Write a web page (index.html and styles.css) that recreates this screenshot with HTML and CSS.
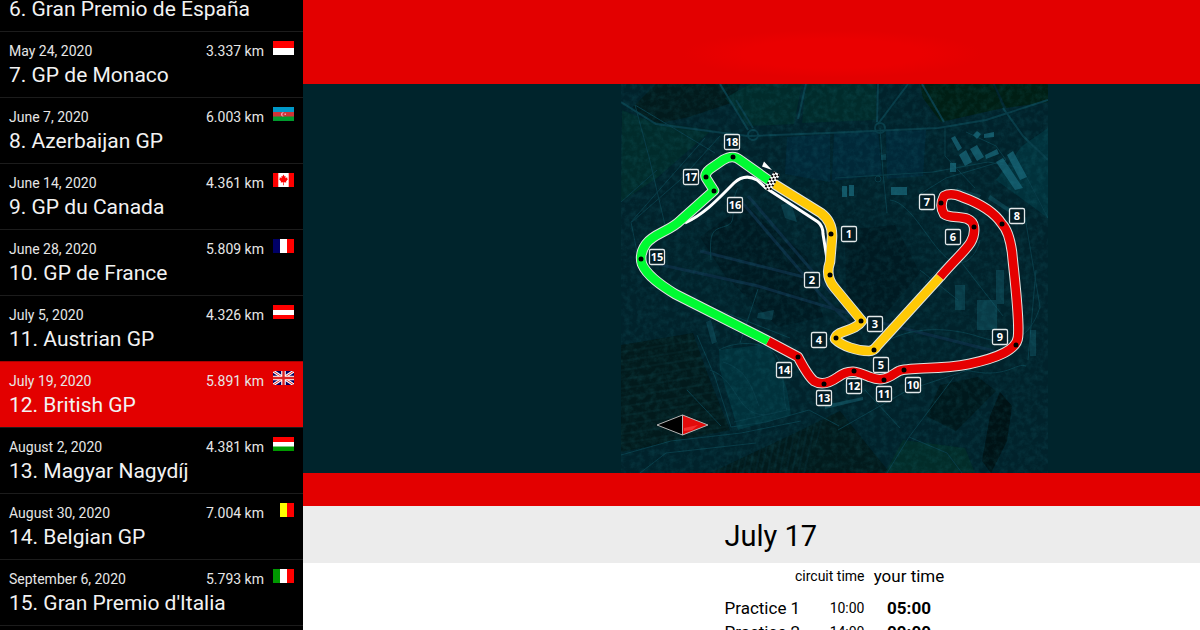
FILE: index.html
```html
<!DOCTYPE html>
<html lang="en">
<head>
<meta charset="utf-8">
<title>Race calendar 2020</title>
<link rel="stylesheet" href="styles.css">
</head>
<body>
<div class="app">
  <nav class="sidebar" aria-label="Races">
    <ul class="races">
      <li><a class="race" href="#r6"><span class="meta"><span class="date">May 10, 2020</span><span class="km">4.655 km</span><svg class="flag" viewBox="0 0 21 14"><path fill="#f00" d="M0 0h21v14H0z"/><path fill="#fc0" d="M0 4h21v6H0z"/></svg></span><span class="name">6. Gran Premio de España</span></a></li>
      <li><a class="race" href="#r7"><span class="meta"><span class="date">May 24, 2020</span><span class="km">3.337 km</span><svg class="flag" viewBox="0 0 21 14"><path fill="#fff" d="M0 0h21v14H0z"/><path fill="#f00" d="M0 0h21v7H0z"/></svg></span><span class="name">7. GP de Monaco</span></a></li>
      <li><a class="race" href="#r8"><span class="meta"><span class="date">June 7, 2020</span><span class="km">6.003 km</span><svg class="flag" viewBox="0 0 21 14"><path fill="#0098c8" d="M0 0h21v5H0z"/><path fill="#d03338" d="M0 5h21v5H0z"/><path fill="#009b2e" d="M0 9.500h21V14H0z"/><path d="M11 5.700a2 2 0 1 0 0 3.400a1.500 1.500 0 1 1 0-3.400zM11.500 6.500h1.500v1.600h-1.500z" fill="#fbd" opacity=".8"/></svg></span><span class="name">8. Azerbaijan GP</span></a></li>
      <li><a class="race" href="#r9"><span class="meta"><span class="date">June 14, 2020</span><span class="km">4.361 km</span><svg class="flag" viewBox="0 0 21 14"><path fill="#fff" d="M0 0h21v14H0z"/><path fill="#f00" d="M0 0h5.300v14H0zM15.700 0H21v14h-5.300zM10.500 1.500l1.100 2 1-.4-.2 2.100 1.900-.9-.2 1.200.9.400-2 2.600.3 1.100-2.500-.4.100 3h-.8l.1-3-2.500.4.300-1.100-2-2.600.9-.4-.2-1.200 1.900.9-.2-2.100 1 .4z"/></svg></span><span class="name">9. GP du Canada</span></a></li>
      <li><a class="race" href="#r10"><span class="meta"><span class="date">June 28, 2020</span><span class="km">5.809 km</span><svg class="flag" viewBox="0 0 21 14"><path fill="#006" d="M0 0h7v14H0z"/><path fill="#fff" d="M7 0h7v14H7z"/><path fill="#f00" d="M14 0h7v14h-7z"/></svg></span><span class="name">10. GP de France</span></a></li>
      <li><a class="race" href="#r11"><span class="meta"><span class="date">July 5, 2020</span><span class="km">4.326 km</span><svg class="flag" viewBox="0 0 21 14"><path fill="#f00" d="M0 0h21v14H0z"/><path fill="#fff" d="M0 5h21v5H0z"/></svg></span><span class="name">11. Austrian GP</span></a></li>
      <li><a class="race current" href="#r12" aria-current="page"><span class="meta"><span class="date">July 19, 2020</span><span class="km">5.891 km</span><svg class="flag" viewBox="0 0 21 14"><path fill="#006" d="M0 0h21v14H0z"/><path d="M0 0l21 14M21 0L0 14" stroke="#fff" stroke-width="3"/><path d="M0 0l21 14M21 0L0 14" stroke="#d22" stroke-width="1"/><path d="M10.500 0v14M0 7h21" stroke="#fff" stroke-width="4.600"/><path d="M10.500 0v14M0 7h21" stroke="#d22" stroke-width="2.400"/></svg></span><span class="name">12. British GP</span></a></li>
      <li><a class="race" href="#r13"><span class="meta"><span class="date">August 2, 2020</span><span class="km">4.381 km</span><svg class="flag" viewBox="0 0 21 14"><path fill="#f00" d="M0 0h21v5H0z"/><path fill="#fff" d="M0 5h21v5H0z"/><path fill="#090" d="M0 9.500h21V14H0z"/></svg></span><span class="name">13. Magyar Nagydíj</span></a></li>
      <li><a class="race" href="#r14"><span class="meta"><span class="date">August 30, 2020</span><span class="km">7.004 km</span><svg class="flag" viewBox="0 0 21 14"><path d="M0 0h7v14H0z"/><path fill="#ff0" d="M7 0h7v14H7z"/><path fill="#f00" d="M14 0h7v14h-7z"/></svg></span><span class="name">14. Belgian GP</span></a></li>
      <li><a class="race" href="#r15"><span class="meta"><span class="date">September 6, 2020</span><span class="km">5.793 km</span><svg class="flag" viewBox="0 0 21 14"><path fill="#090" d="M0 0h7v14H0z"/><path fill="#fff" d="M7 0h7v14H7z"/><path fill="#f00" d="M14 0h7v14h-7z"/></svg></span><span class="name">15. Gran Premio d'Italia</span></a></li>
      <li><a class="race" href="#r16"><span class="meta"><span class="date">September 20, 2020</span><span class="km">5.063 km</span></span><span class="name">16. Singapore GP</span></a></li>
    </ul>
  </nav>

  <main class="content">
    <header class="banner"></header>
    <section class="circuit">
      <svg class="map" viewBox="621 84 427 389" role="img" aria-label="Circuit map">
        <defs>
          <filter id="grain" x="0" y="0" width="100%" height="100%">
            <feTurbulence type="fractalNoise" baseFrequency=".16" numOctaves="4" seed="8"/>
            <feColorMatrix values="0 0 0 0 .02  0 0 0 0 .32  0 0 0 0 .38  1.600 0 0 0 -.6"/>
          </filter>
          <pattern id="furrow" width="9" height="9" patternUnits="userSpaceOnUse" patternTransform="rotate(-9)"><path d="M0 4h9" stroke="#06282c" stroke-width="1"/></pattern>
          <pattern id="rows" width="6" height="6" patternUnits="userSpaceOnUse" patternTransform="rotate(12)"><path d="M3 0v6" stroke="#03282f" stroke-width="1"/></pattern>
        </defs>
        <path fill="#01222b" d="M621 84h427v389H621z"/>
        <!-- fields -->
        <path fill="#021a1c" d="M656 84h84l-6 18-45 15-38 8-18-18zM710 473l85-40 45-22 50 62zM621 345l72-12 15 42 22 55-109 22z"/>
        <path fill="#012b2b" d="M750 84h52l-8 40-45 2-24-28zM806 84h70l1 36-75 3zM622 110l30 12 60 8-55 48-36 24z"/>
        <path fill="#001e14" d="M920 84h73l10 24-62 14-18-24zM995 84h53v18l-42 6z"/>
        <path fill="#012838" d="M787 137l43-3v48l-45-8zM834 132l44-2 4 45-50 6zM886 131l40-1-3 46-36 3z"/>
        <path fill="#01313b" d="M1022 146l26-18v90l-52-38zM719 350l50-6 18 45 4 26-53 15-18-60z"/>
        <path fill="#001a22" d="M745 205l62 52 16 60-45 10-52-50-26-40zM845 230l50-5 25 48-44 52-30-30z"/>
        <path fill="#022c29" d="M903 440l62 8 10 25h-90z"/>
        <path fill="#001215" d="M1000 392l12 14-5 35-16 32-9-12 8-45z"/>
        <path fill="#00181c" d="M940 385l38-8 18 14-40 40-30-15z"/>
        <path fill="url(#furrow)" d="M621 345l72-12 15 42 22 55-109 22z"/>
        <path fill="url(#rows)" d="M735 440l90-20-20 53H715z"/>
        <!-- roads and runways -->
        <g fill="none" stroke="#083b47" stroke-width="1">
          <path d="M621 102l35 22 60 8 32 4M748 136l80-3 110-5 48-8 62-20M748 130l-28-46M753 128l-17-28M806 84l-8 35M877 122l1-38M878 124l30-40M922 84l22 38M1003 108l20 28 25 24" stroke-width="2"/>
          <circle cx="753" cy="135" r="5" stroke-width="2"/><circle cx="880" cy="128" r="5" stroke-width="2"/><circle cx="878" cy="179" r="3"/>
          <path d="M635 105l14 52 16 68M635 105l80 48M720 136l-40 44-48 42M705 138l-74 84 8 40M657 170l-36 32"/>
          <path d="M740 200l80 94 30 30M748 196l84 98M700 251l120 30M648 262l110 24 120 36 120 30" stroke="#0a2b3f" stroke-width="3"/>
          <path d="M711 260c-2-30 2-30 15-34s2-20 12-38M675 293l115 45M740 343l18-54"/>
          <path d="M835 178l98-6 55-10 34 6 26 50M945 128v28l30 32M966 132l30 14 10 14-60 18-26 16M880 128l3 45 4 40M890 200c22 2 42 50 60 60s28-10 30-20"/>
          <path d="M697 335l18 42 16 50 35-5 43-12 30 16M687 390l34 36M719 350c14-8 40-10 54 2s8 44 14 58l-53 12M710 370c30 10 26 50 60 44M723 362c26 8 30 30 36 44"/>
          <path d="M621 455l50-14 70-8 60-12M640 473l26-20 90-10M900 428l-35-38M909 437l45-60M909 437l-22 36M909 437l38 16 15 20M838 430l70-40 60-20"/>
          <path d="M880 345c30-20 70-18 100-8s50 2 60-30l-15-90M966 370c40 10 50-8 60-4M1036 270l-8 90M920 270l38 30M925 283l30-30M958 258l45 58"/>
        </g>
        <!-- buildings -->
        <g fill="#176273">
          <path d="M951 138l4-2 7 12-4 3zM973 135l4-4 4 3-4 5zM984 134l10-2v5l-10 1zM959 155l7-5 6 12-7 4zM970 149l7-4 7 12-7 4zM985 155l12-6 2 5-13 5zM950 163h6v9h-6zM996 162l7-4 20 30-8 2zM1007 155l6-4 14 26-7 3zM891 187h16v8h-16zM842 186h5v11h-5zM849 185h5v11h-5z" opacity=".8"/>
          <path d="M881 155l5-1v6h-5zM758 313l16-3-2 10-15-2zM781 205l10-3 6 20-12-4zM957 188l24 7-2 4-24-7zM990 195l22 15-2 3-22-14zM955 285h10v25h-10zM996 270h8v34h-8zM977 300h20v30h-20zM1030 330h6v26h-6zM706 322l5-2 6 22-5 2z" opacity=".4"/>
          <path d="M825 405l38-8v3l-38 9z" opacity=".5"/>
        </g>
        <path d="M621 84h427v389H621z" filter="url(#grain)" opacity=".18"/>
        <!-- pit lane -->
        <path d="M685 223C706 213 719 198 734 183Q745 173 757 180L766 188 818 222Q823 226 823 234L827 259" fill="none" stroke="#fff" stroke-width="3"/>
        <!-- track outline, then the three sectors -->
        <g fill="none" stroke-linejoin="round">
          <path d="M771 182L740 160Q733 154 723 160L710 169Q704 174 706 178L714 190.500 681 220C669 232 654 233 646 244Q639 254 642 264C647 276 662 286 675 294L768 341 798 357Q808 376 814 381 824 387 838 377C850 368 858 372 870 377 885 383 891 375 899 371 909 367 940 370 969 364 997 358 1017 350 1018 337C1020 320 1014 274 1012 252Q1009 231 1002 224C993 210 976 202 962 197Q951 192 944 196 939 206 944 214C951 220 972 213 974 227 976 244 963 250 940 277L877 346Q874 351 869 351C857 351 842 346 835 339 836 330 855 332 862 321L834 287Q825 276 830 262L832 238Q833 222 821 213Z" stroke="#dfe3e0" stroke-width="10.500"/>
          <g stroke-width="8.500">
            <path stroke="#e60000" d="M768 341L798 357Q808 376 814 381 824 387 838 377C850 368 858 372 870 377 885 383 891 375 899 371 909 367 940 370 969 364 997 358 1017 350 1018 337C1020 320 1014 274 1012 252Q1009 231 1002 224C993 210 976 202 962 197Q951 192 944 196 939 206 944 214C951 220 972 213 974 227 976 244 963 250 940 277"/>
            <path stroke="#ffc905" d="M940 277L877 346Q874 351 869 351C857 351 842 346 835 339 836 330 855 332 862 321L834 287Q825 276 830 262L832 238Q833 222 821 213L771 182"/>
            <path stroke="#00fb32" d="M771 182L740 160Q733 154 723 160L710 169Q704 174 706 178L714 190.500 681 220C669 232 654 233 646 244Q639 254 642 264C647 276 662 286 675 294L768 341"/>
          </g>
        </g>
        <!-- start line: three chequered columns across track and pit lane -->
        <g fill="none" stroke-width="2">
          <path stroke="#fff" stroke-width="7" d="M777 173L767 190"/>
          <path stroke="#000" stroke-dasharray="2 2" d="M774.700 171.700l-10 17M779.300 174.300l-10 17"/>
          <path stroke="#000" stroke-dasharray="2 2" stroke-dashoffset="2" d="M777 173l-10 17"/>
        </g>
        <path fill="#fff" d="M764 161.500l8 8.500-10-3.500z"/>
        <g>
          <circle cx="733" cy="157" r="2.500"/><circle cx="706" cy="177" r="2.500"/><circle cx="714" cy="191" r="2.500"/><circle cx="641" cy="259" r="2.500"/><circle cx="831" cy="234" r="2.500"/><circle cx="830" cy="275" r="2.500"/><circle cx="861" cy="321" r="2.500"/><circle cx="836" cy="338" r="2.500"/><circle cx="874" cy="350" r="2.500"/><circle cx="974" cy="227" r="2.500"/><circle cx="941" cy="203" r="2.500"/><circle cx="1002" cy="224" r="2.500"/><circle cx="1016" cy="345" r="2.500"/><circle cx="904" cy="370" r="2.500"/><circle cx="884" cy="380" r="2.500"/><circle cx="854" cy="371" r="2.500"/><circle cx="824" cy="384" r="2.500"/><circle cx="798" cy="357" r="2.500"/>
        </g>
        <!-- corner numbers -->
        <g class="corners">
          <g transform="translate(849 234)"><rect x="-7.500" y="-7.500" width="15" height="15" rx="1.500"/><text y="4">1</text></g>
          <g transform="translate(812 280)"><rect x="-7.500" y="-7.500" width="15" height="15" rx="1.500"/><text y="4">2</text></g>
          <g transform="translate(875 324)"><rect x="-7.500" y="-7.500" width="15" height="15" rx="1.500"/><text y="4">3</text></g>
          <g transform="translate(819 340)"><rect x="-7.500" y="-7.500" width="15" height="15" rx="1.500"/><text y="4">4</text></g>
          <g transform="translate(881 365)"><rect x="-7.500" y="-7.500" width="15" height="15" rx="1.500"/><text y="4">5</text></g>
          <g transform="translate(953 237)"><rect x="-7.500" y="-7.500" width="15" height="15" rx="1.500"/><text y="4">6</text></g>
          <g transform="translate(927 202)"><rect x="-7.500" y="-7.500" width="15" height="15" rx="1.500"/><text y="4">7</text></g>
          <g transform="translate(1017 216)"><rect x="-7.500" y="-7.500" width="15" height="15" rx="1.500"/><text y="4">8</text></g>
          <g transform="translate(1000 337)"><rect x="-7.500" y="-7.500" width="15" height="15" rx="1.500"/><text y="4">9</text></g>
          <g transform="translate(913 385)"><rect x="-7.500" y="-7.500" width="15" height="15" rx="1.500"/><text y="4">10</text></g>
          <g transform="translate(884 394)"><rect x="-7.500" y="-7.500" width="15" height="15" rx="1.500"/><text y="4">11</text></g>
          <g transform="translate(854 386)"><rect x="-7.500" y="-7.500" width="15" height="15" rx="1.500"/><text y="4">12</text></g>
          <g transform="translate(824 398)"><rect x="-7.500" y="-7.500" width="15" height="15" rx="1.500"/><text y="4">13</text></g>
          <g transform="translate(784 370)"><rect x="-7.500" y="-7.500" width="15" height="15" rx="1.500"/><text y="4">14</text></g>
          <g transform="translate(657 257)"><rect x="-7.500" y="-7.500" width="15" height="15" rx="1.500"/><text y="4">15</text></g>
          <g transform="translate(735 205)"><rect x="-7.500" y="-7.500" width="15" height="15" rx="1.500"/><text y="4">16</text></g>
          <g transform="translate(691 177)"><rect x="-7.500" y="-7.500" width="15" height="15" rx="1.500"/><text y="4">17</text></g>
          <g transform="translate(732 142)"><rect x="-7.500" y="-7.500" width="15" height="15" rx="1.500"/><text y="4">18</text></g>
        </g>
        <!-- compass -->
        <path d="M657 425l25-10v20z"/><path fill="#e30b0b" d="M683 415l25 10-25 10z"/><path fill="#ff4a4a" d="M684 428l14-3-6 5-8 1z" opacity=".6"/>
        <path d="M657 425l25.500-10 25.500 10-25.500 10zM682.500 415v20" fill="none" stroke="#b5b5b5"/>
      </svg>
    </section>
    <div class="stripe"></div>
    <section class="schedule">
      <div class="day"><h2>July 17</h2></div>
      <div class="sessions">
        <table class="times">
          <thead><tr><th scope="col" colspan="2" class="local">circuit time</th><th scope="col" class="yours">your time</th></tr></thead>
          <tbody>
            <tr><th scope="row">Practice 1</th><td class="local">10:00</td><td class="yours">05:00</td></tr>
            <tr><th scope="row">Practice 2</th><td class="local">14:00</td><td class="yours">09:00</td></tr>
          </tbody>
        </table>
      </div>
    </section>
  </main>
</div>
</body>
</html>
```
FILE: styles.css
```css
* { box-sizing: border-box; }
body {
  margin: 0;
  font-family: Roboto, "Liberation Sans", sans-serif;
  background: #fff;
  color: #000;
}
.app {
  display: flex;
  height: 100vh;
  overflow: hidden;
}
.sidebar {
  flex: 0 0 303px;
  background: #000;
  overflow: hidden;
}
.races {
  list-style: none;
  margin: -35px 0 0;
  padding: 0;
}
.race {
  display: block;
  padding: 9px 9px 8px;
  border-top: 1px solid #1c1c1c;
  color: #f2f2f2;
  text-decoration: none;
}
.race.current { background: #e30000; border-color: #a00; }
.meta {
  display: flex;
  align-items: flex-start;
  font-size: 14px;
  line-height: 20px;
  color: #e6e6e6;
}
.date { flex: 1; }
.flag { width: 21px; height: 14px; margin-left: 9px; }
.name {
  display: block;
  font-size: 21px;
  line-height: 28px;
}
.content {
  flex: 1;
  min-width: 0;
  overflow: hidden;
}
.banner {
  height: 84px;
  background: radial-gradient(ellipse 150px 24px at 59% 64%, #ea0000 60%, #e30000);
}
.circuit {
  display: flex;
  justify-content: center;
  padding-left: 166px;
  background: #00242c;
}
.map { display: block; width: 427px; height: 389px; }
.corners text {
  font: bold 11px "Noto Sans", "Open Sans", sans-serif;
  fill: #fff;
  text-anchor: middle;
}
.corners rect { fill: #031c24; stroke: #e4e9ea; stroke-width: 1.3px; }
.stripe { height: 33px; background: #e30000; }
.day {
  background: #ececec;
  padding: 14px 0 10px 166px;
}
.day h2 {
  width: 220px;
  margin: 0 auto;
  font-size: 29px;
  font-weight: 400;
  line-height: 33px;
}
.sessions { padding-left: 166px; }
.times {
  width: 220px;
  margin: 0 auto;
  border-collapse: collapse;
  font-size: 17px;
  line-height: 24px;
}
.times th, .times td { padding: 0; text-align: left; font-weight: 400; white-space: nowrap; }
.times thead th { padding: 1px 0 8px; }
.times th.local, .times td.local { font-size: 14px; text-align: right; }
.times th.yours, .times td.yours { width: 80px; padding-left: 9px; text-align: center; }
.times td.yours { font-weight: 700; }
```
